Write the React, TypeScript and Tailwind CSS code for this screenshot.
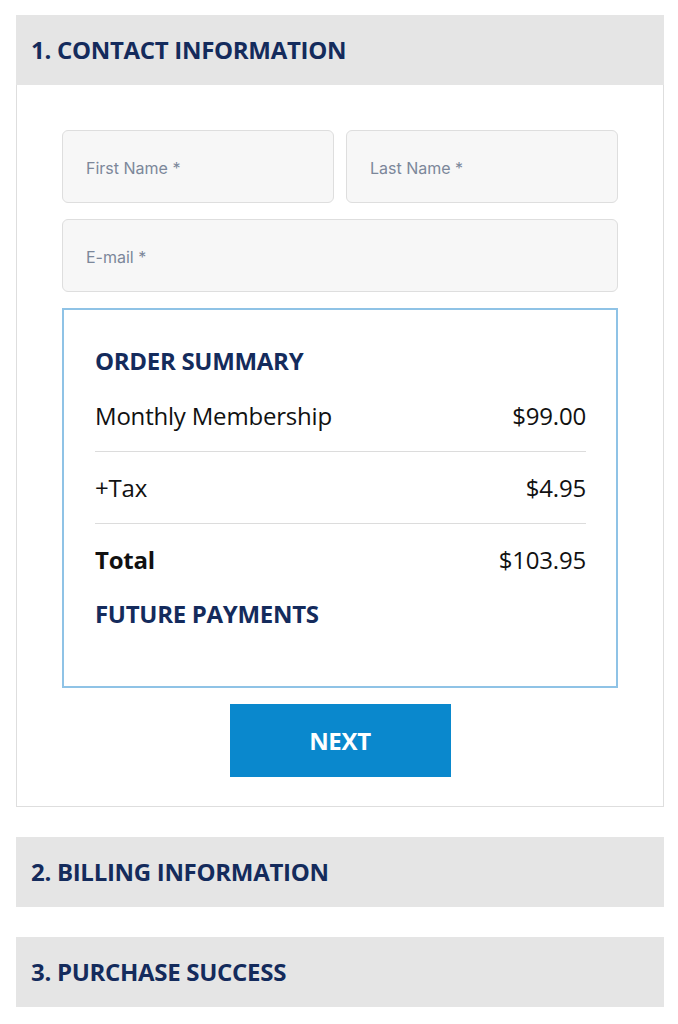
import React from "react";

const heading = "font-['Open_Sans',sans-serif] font-bold text-[24px] leading-[30px] text-[#142b5c] tracking-[-0.3px]";

function SectionHeader({ title }: { title: string }) {
  return (
    <div className="h-[70px] bg-[#e5e5e5] flex items-center px-[15px]">
      <h2 className={heading}>{title}</h2>
    </div>
  );
}

function Field({ label }: { label: string }) {
  return (
    <div className="h-[73px] rounded-[6px] border border-[#dedede] bg-[#f7f7f7] flex items-center px-[23px] pt-[2px]">
      <span className="font-['Inter',sans-serif] text-[16px] text-[#7c879a]">{label}</span>
    </div>
  );
}

function Row({ label, value, bold, border }: { label: string; value: string; bold?: boolean; border?: boolean }) {
  return (
    <div className={`flex justify-between items-center py-[20px] ${border ? "border-b border-[#dcdcdc]" : ""}`}>
      <span className={`text-[24px] leading-[31px] text-[#111] tracking-[-0.2px] ${bold ? "font-bold" : "font-normal"}`}>{label}</span>
      <span className="text-[24px] leading-[31px] text-[#111] tracking-[-0.2px]">{value}</span>
    </div>
  );
}

export default function App() {
  return (
    <div className="bg-white min-h-[1024px] pl-4 pr-[14px] pt-[15px] font-['Open_Sans',sans-serif]">
      <SectionHeader title="1. CONTACT INFORMATION" />
      <div className="border border-t-0 border-[#dedede] px-[45px] pt-[45px] pb-[29px]">
        <div className="grid grid-cols-2 gap-3">
          <Field label="First Name *" />
          <Field label="Last Name *" />
        </div>
        <div className="mt-4">
          <Field label="E-mail *" />
        </div>
        <div className="mt-4 border-2 border-[#8fc3e6] pl-[31px] pr-[30px] pt-[36px] pb-[57px]">
          <h3 className={heading}>ORDER SUMMARY</h3>
          <div className="mt-[4px]">
            <Row label="Monthly Membership" value="$99.00" border />
            <Row label="+Tax" value="$4.95" border />
            <Row label="Total" value="$103.95" bold />
          </div>
          <h3 className={`${heading} mt-[4px]`}>FUTURE PAYMENTS</h3>
        </div>
        <div className="flex justify-center mt-4">
          <button className="w-[221px] h-[73px] bg-[#0a88cd] text-white font-bold text-[24px] tracking-[-0.3px] font-['Open_Sans',sans-serif]">
            NEXT
          </button>
        </div>
      </div>
      <div className="mt-[30px]">
        <SectionHeader title="2. BILLING INFORMATION" />
      </div>
      <div className="mt-[30px]">
        <SectionHeader title="3. PURCHASE SUCCESS" />
      </div>
    </div>
  );
}
